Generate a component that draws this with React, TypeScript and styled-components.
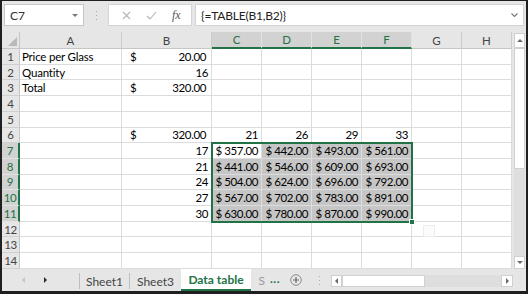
import React from "react"
import styled, { createGlobalStyle } from "styled-components"

const GREEN = "#217346"
const GRID = "#dadcdd"
const HEAD_BG = "#e6e6e6"
const HEAD_ACTIVE = "#d2d2d2"
const SEL_BG = "#c6c6c6"
const HEAD_H = 17
const ROW_H = 220 / 14
const COLS = [18, 102, 90, 50, 50, 50, 50, 50, 50]
const LETTERS = ["A", "B", "C", "D", "E", "F", "G", "H"]
const FONT = `Lato, "Liberation Sans", sans-serif`

const GlobalStyle = createGlobalStyle`
  html, body {
    margin: 0;
    padding: 0;
    background: #fff;
  }
  * {
    box-sizing: border-box;
  }
`

const Frame = styled.div`
  width: 528px;
  height: 294px;
  display: flex;
  flex-direction: column;
  border: 2px solid #1f1f1f;
  border-top-width: 1px;
  border-bottom-width: 3px;
  background: ${HEAD_BG};
  overflow: hidden;
  font-family: ${FONT};
`

/* ---------- formula bar ---------- */

const FormulaBar = styled.div`
  height: 31px;
  display: flex;
  align-items: flex-start;
  padding: 3px 0 0 2px;
  flex-shrink: 0;
`

const NameBox = styled.div`
  width: 80px;
  height: 22px;
  background: #fff;
  border: 1px solid #c6c6c6;
  display: flex;
  align-items: center;
  justify-content: space-between;
  padding: 0 5px 0 5px;
  font-size: 12px;
  color: #333;
`

const Grip = styled.div`
  width: 24px;
  height: 22px;
  display: flex;
  align-items: center;
  justify-content: center;
`

const FxBox = styled.div`
  width: 84px;
  height: 22px;
  background: #fff;
  border: 1px solid #d4d4d4;
  display: flex;
  align-items: center;
  justify-content: space-around;
  padding: 0 3px 0 6px;
`

const FxLabel = styled.span`
  font-family: "Liberation Serif", serif;
  font-style: italic;
  font-size: 12px;
  color: #555;
`

const FormulaInput = styled.div`
  flex: 1;
  height: 22px;
  margin: 0 2px 0 3px;
  background: #fff;
  border: 1px solid #d4d4d4;
  display: flex;
  align-items: center;
  justify-content: space-between;
  padding: 0 5px 0 5px;
  font-size: 12px;
  letter-spacing: -0.2px;
  color: #222;
`

/* ---------- sheet ---------- */

const SheetArea = styled.div`
  flex: 1;
  display: flex;
  min-height: 0;
`

const Grid = styled.div`
  position: relative;
  display: grid;
  grid-template-columns: ${COLS.map((c) => `${c}px`).join(" ")};
  grid-template-rows: ${HEAD_H}px repeat(14, ${ROW_H}px);
  background: #fff;
`

const Corner = styled.div`
  background: ${HEAD_BG};
  border-right: 1px solid #c6c6c6;
  border-bottom: 1px solid #c6c6c6;
  display: flex;
  align-items: flex-end;
  justify-content: flex-end;
  padding: 0 2px 2px 0;
`

const ColHeader = styled.div<{ $active?: boolean }>`
  display: flex;
  align-items: center;
  justify-content: center;
  font-size: 11.5px;
  background: ${(p) => (p.$active ? HEAD_ACTIVE : HEAD_BG)};
  color: ${(p) => (p.$active ? GREEN : "#444")};
  border-right: 1px solid ${(p) => (p.$active ? "#e2e2e2" : "#cbcbcb")};
  border-bottom: ${(p) => (p.$active ? `2px solid ${GREEN}` : "1px solid #c6c6c6")};
`

const RowHeader = styled.div<{ $active?: boolean }>`
  display: flex;
  align-items: center;
  justify-content: center;
  font-size: 11.5px;
  letter-spacing: -0.3px;
  background: ${(p) => (p.$active ? HEAD_ACTIVE : HEAD_BG)};
  color: ${(p) => (p.$active ? GREEN : "#444")};
  border-right: ${(p) => (p.$active ? `2px solid ${GREEN}` : "1px solid #c6c6c6")};
  border-bottom: 1px solid ${(p) => (p.$active ? "#e2e2e2" : "#d0d0d0")};
`

const Cell = styled.div<{ $align?: "left" | "right" | "split"; $selected?: boolean }>`
  display: flex;
  align-items: center;
  justify-content: ${(p) =>
    p.$align === "right" ? "flex-end" : p.$align === "split" ? "space-between" : "flex-start"};
  padding: ${(p) => (p.$align === "split" ? "0 5px 0 8px" : "0 3px 0 2px")};
  font-size: 11.5px;
  letter-spacing: ${(p) => (p.$align === "left" ? "-0.2px" : "-0.4px")};
  color: #000;
  white-space: nowrap;
  background: ${(p) => (p.$selected ? SEL_BG : "#fff")};
  border-right: 1px solid ${GRID};
  border-bottom: 1px solid ${GRID};
`

const Selection = styled.div`
  position: absolute;
  border: 2px solid ${GREEN};
  pointer-events: none;
`

const FillHandle = styled.div`
  position: absolute;
  right: -4px;
  bottom: -4px;
  width: 6px;
  height: 6px;
  background: ${GREEN};
  border: 1px solid #fff;
`

const QuickAnalysis = styled.div`
  position: absolute;
  width: 12px;
  height: 12px;
  border: 1px solid #ececec;
  background: #fbfbfb;
`

const VScroll = styled.div`
  width: 14px;
  display: flex;
  flex-direction: column;
  padding: 1px 1px 0 2px;
  background: ${HEAD_BG};
`

const ScrollButton = styled.div<{ $h?: number; $w?: number }>`
  height: ${(p) => (p.$h ? `${p.$h}px` : "100%")};
  width: ${(p) => (p.$w ? `${p.$w}px` : "100%")};
  flex-shrink: 0;
  background: #fff;
  border: 1px solid #d0d0d0;
  display: flex;
  align-items: center;
  justify-content: center;
`

const Thumb = styled.div<{ $size: number; $horizontal?: boolean }>`
  flex-shrink: 0;
  ${(p) => (p.$horizontal ? `width: ${p.$size}px;` : `height: ${p.$size}px;`)}
  background: #fff;
  border: 1px solid #d0d0d0;
`

const Track = styled.div`
  flex: 1;
  background: #dedede;
`

/* ---------- tab bar ---------- */

const TabBar = styled.div`
  height: 22px;
  flex-shrink: 0;
  display: flex;
  align-items: stretch;
  font-size: 12px;
  color: #444;
`

const TabNav = styled.div`
  width: 77px;
  display: flex;
  align-items: center;
  padding-left: 20px;
  gap: 19px;
`

const Tab = styled.div<{ $width: number; $active?: boolean }>`
  width: ${(p) => p.$width}px;
  display: flex;
  align-items: center;
  justify-content: center;
  margin: ${(p) => (p.$active ? "0" : "4px 0 2px")};
  ${(p) =>
    p.$active
      ? `background: #fff; color: ${GREEN}; font-weight: 700; border-bottom: 2px solid ${GREEN}; padding-top: 1px;`
      : "border-left: 1px solid #bdbdbd;"}
`

const ClippedTab = styled.div`
  width: 14px;
  display: flex;
  align-items: center;
  justify-content: flex-end;
  overflow: hidden;
  color: #9a9a9a;
`

const More = styled.div`
  width: 20px;
  display: flex;
  align-items: center;
  justify-content: center;
  color: ${GREEN};
  font-weight: 700;
  letter-spacing: 0.5px;
  padding-bottom: 3px;
`

const IconSlot = styled.div<{ $width: number }>`
  width: ${(p) => p.$width}px;
  display: flex;
  align-items: center;
  justify-content: center;
`

const HScroll = styled.div`
  width: 182px;
  height: 12px;
  align-self: center;
  display: flex;
  margin-top: 1px;
`

/* ---------- icons ---------- */

const Triangle = ({ dir, color, size = 4 }: { dir: "up" | "down" | "left" | "right"; color: string; size?: number }) => {
  const pts = {
    up: "0,4 4,0 8,4",
    down: "0,0 8,0 4,4",
    left: "4,0 4,8 0,4",
    right: "0,0 0,8 4,4",
  }[dir]
  const horiz = dir === "left" || dir === "right"
  return (
    <svg width={horiz ? size : size * 2} height={horiz ? size * 2 : size} viewBox={horiz ? "0 0 4 8" : "0 0 8 4"}>
      <polygon points={pts} fill={color} />
    </svg>
  )
}

type Value = string | { acct: string } | null
const acct = (v: string) => ({ acct: v })

const DATA: Value[][] = [
  ["Price per Glass", acct("20.00"), null, null, null, null, null, null],
  ["Quantity", "16", null, null, null, null, null, null],
  ["Total", acct("320.00"), null, null, null, null, null, null],
  [null, null, null, null, null, null, null, null],
  [null, null, null, null, null, null, null, null],
  [null, acct("320.00"), "21", "26", "29", "33", null, null],
  [null, "17", "$ 357.00", "$ 442.00", "$ 493.00", "$ 561.00", null, null],
  [null, "21", "$ 441.00", "$ 546.00", "$ 609.00", "$ 693.00", null, null],
  [null, "24", "$ 504.00", "$ 624.00", "$ 696.00", "$ 792.00", null, null],
  [null, "27", "$ 567.00", "$ 702.00", "$ 783.00", "$ 891.00", null, null],
  [null, "30", "$ 630.00", "$ 780.00", "$ 870.00", "$ 990.00", null, null],
  [null, null, null, null, null, null, null, null],
  [null, null, null, null, null, null, null, null],
  [null, null, null, null, null, null, null, null],
]

const inSelection = (r: number, c: number) => r >= 7 && r <= 11 && c >= 2 && c <= 5

const selLeft = COLS[0] + COLS[1] + COLS[2] - 1
const selTop = HEAD_H + 6 * ROW_H - 1

const App: React.FunctionComponent = () => {
  return (
    <>
      <GlobalStyle />
      <Frame>
        <FormulaBar>
          <NameBox>
            <span>C7</span>
            <Triangle dir="down" color="#7a7a7a" size={3} />
          </NameBox>
          <Grip>
            <svg width="3" height="9" viewBox="0 0 3 9">
              <rect x="1" y="0" width="1" height="1" fill="#a8a8a8" />
              <rect x="1" y="4" width="1" height="1" fill="#a8a8a8" />
              <rect x="1" y="8" width="1" height="1" fill="#a8a8a8" />
            </svg>
          </Grip>
          <FxBox>
            <svg width="9" height="9" viewBox="0 0 9 9">
              <path d="M1 1 L8 8 M8 1 L1 8" stroke="#b4b4b4" strokeWidth="1.1" />
            </svg>
            <svg width="11" height="9" viewBox="0 0 11 9">
              <path d="M1 5 L4 8 L10 1" stroke="#b4b4b4" strokeWidth="1.1" fill="none" />
            </svg>
            <FxLabel>fx</FxLabel>
          </FxBox>
          <FormulaInput>
            <span>{"{=TABLE(B1,B2)}"}</span>
            <svg width="7" height="5" viewBox="0 0 7 5">
              <path d="M0.5 0.5 L3.5 3.5 L6.5 0.5" stroke="#777" strokeWidth="1.1" fill="none" />
            </svg>
          </FormulaInput>
        </FormulaBar>

        <SheetArea>
          <Grid>
            <Corner>
              <svg width="9" height="9" viewBox="0 0 9 9">
                <polygon points="9,0 9,9 0,9" fill="#b9b9b9" />
              </svg>
            </Corner>
            {LETTERS.map((l, i) => (
              <ColHeader key={l} $active={i >= 2 && i <= 5}>
                {l}
              </ColHeader>
            ))}
            {DATA.map((row, ri) => {
              const r = ri + 1
              return (
                <React.Fragment key={r}>
                  <RowHeader $active={r >= 7 && r <= 11}>{r}</RowHeader>
                  {row.map((v, ci) => {
                    const selected = inSelection(r, ci) && !(r === 7 && ci === 2)
                    if (v && typeof v === "object") {
                      return (
                        <Cell key={ci} $align="split" $selected={selected}>
                          <span>$</span>
                          <span>{v.acct}</span>
                        </Cell>
                      )
                    }
                    return (
                      <Cell key={ci} $align={ci === 0 ? "left" : "right"} $selected={selected}>
                        {v}
                      </Cell>
                    )
                  })}
                </React.Fragment>
              )
            })}
            <Selection style={{ left: selLeft, top: selTop, width: 202, height: 5 * ROW_H + 2 }}>
              <FillHandle />
            </Selection>
            <QuickAnalysis style={{ left: 421, top: HEAD_H + 11 * ROW_H + 3 }} />
          </Grid>
          <VScroll>
            <ScrollButton $h={15}>
              <Triangle dir="up" color="#6a6a6a" size={3} />
            </ScrollButton>
            <Thumb $size={121} />
            <Track />
            <ScrollButton $h={13}>
              <Triangle dir="down" color="#6a6a6a" size={3} />
            </ScrollButton>
          </VScroll>
        </SheetArea>

        <TabBar>
          <TabNav>
            <Triangle dir="left" color="#c4c4c4" size={3} />
            <Triangle dir="right" color="#2a2a2a" size={3} />
          </TabNav>
          <Tab $width={50}>Sheet1</Tab>
          <Tab $width={52}>Sheet3</Tab>
          <Tab $width={70} $active>
            Data table
          </Tab>
          <ClippedTab>S</ClippedTab>
          <More>...</More>
          <IconSlot $width={22}>
            <svg width="12" height="12" viewBox="0 0 12 12">
              <circle cx="6" cy="6" r="5.3" stroke="#8a8a8a" strokeWidth="1" fill="none" />
              <path d="M6 3 V9 M3 6 H9" stroke="#6a6a6a" strokeWidth="1.2" />
            </svg>
          </IconSlot>
          <IconSlot $width={24}>
            <svg width="3" height="9" viewBox="0 0 3 9">
              <rect x="1" y="0" width="1" height="1" fill="#b0b0b0" />
              <rect x="1" y="4" width="1" height="1" fill="#b0b0b0" />
              <rect x="1" y="8" width="1" height="1" fill="#b0b0b0" />
            </svg>
          </IconSlot>
          <HScroll>
            <ScrollButton $w={11}>
              <Triangle dir="left" color="#6a6a6a" size={3} />
            </ScrollButton>
            <Thumb $size={83} $horizontal />
            <Track />
            <ScrollButton $w={12}>
              <Triangle dir="right" color="#6a6a6a" size={3} />
            </ScrollButton>
          </HScroll>
        </TabBar>
      </Frame>
    </>
  )
}

export default App
